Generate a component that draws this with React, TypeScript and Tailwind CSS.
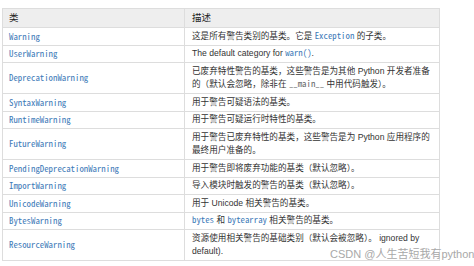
const mono = "font-['Noto_Sans_Mono_CJK_SC','Liberation_Mono',monospace]";

const rows: { name: string; desc: React.ReactNode }[] = [
  {
    name: 'Warning',
    desc: (
      <>
        这是所有警告类别的基类。它是 <Code>Exception</Code> 的子类。
      </>
    ),
  },
  {
    name: 'UserWarning',
    desc: (
      <>
        The default category for <Code>warn()</Code>.
      </>
    ),
  },
  {
    name: 'DeprecationWarning',
    desc: (
      <>
        已废弃特性警告的基类，这些警告是为其他 Python 开发者准备
        <br />
        的（默认会忽略，除非在 <Code gray>__main__</Code> 中用代码触发）。
      </>
    ),
  },
  { name: 'SyntaxWarning', desc: '用于警告可疑语法的基类。' },
  { name: 'RuntimeWarning', desc: '用于警告可疑运行时特性的基类。' },
  {
    name: 'FutureWarning',
    desc: (
      <>
        用于警告已废弃特性的基类，这些警告是为 Python 应用程序的
        <br />
        最终用户准备的。
      </>
    ),
  },
  { name: 'PendingDeprecationWarning', desc: '用于警告即将废弃功能的基类（默认忽略）。' },
  { name: 'ImportWarning', desc: '导入模块时触发的警告的基类（默认忽略）。' },
  { name: 'UnicodeWarning', desc: '用于 Unicode 相关警告的基类。' },
  {
    name: 'BytesWarning',
    desc: (
      <>
        <Code>bytes</Code> 和 <Code>bytearray</Code> 相关警告的基类。
      </>
    ),
  },
  {
    name: 'ResourceWarning',
    desc: (
      <>
        资源使用相关警告的基础类别（默认会被忽略）。 ignored by
        <br />
        default).
      </>
    ),
  },
];

function Code({ children, gray }: { children: React.ReactNode; gray?: boolean }) {
  return (
    <code className={`${mono} leading-none text-[8.8px] ${gray ? 'text-[#666]' : 'text-[#3d7ab8]'}`}>
      {children}
    </code>
  );
}

export default function App() {
  return (
    <div className="relative w-[474px] h-[266px] bg-white overflow-hidden font-['Liberation_Sans','Noto_Sans_CJK_SC',sans-serif]">
      <div className="pt-[7.5px] pl-[2px]">
        <table className="w-[438px] border-collapse border border-[#dddddd] table-fixed text-[8.6px] leading-[13.5px] text-[#333]">
          <colgroup>
            <col className="w-[182px]" />
            <col />
          </colgroup>
          <thead>
            <tr className="bg-[#eeeeee]">
              <th className="border border-[#dddddd] px-[6px] py-[2.5px] text-left font-normal text-[9.5px] text-[#222]">类</th>
              <th className="border border-[#dddddd] pl-[7px] pr-[2px] py-[2.5px] text-left font-normal text-[9.5px] text-[#222]">描述</th>
            </tr>
          </thead>
          <tbody>
            {rows.map((r) => (
              <tr key={r.name}>
                <td className={`${mono} border border-[#dddddd] px-[6px] py-[1.5px] align-middle text-[8.8px] text-[#3d7ab8]`}>
                  {r.name}
                </td>
                <td className="border border-[#dddddd] pl-[7px] pr-[2px] py-[1.5px] align-middle whitespace-nowrap">{r.desc}</td>
              </tr>
            ))}
          </tbody>
        </table>
      </div>

      {/* watermark */}
      <div className="absolute left-[330px] top-[247px] text-[11px] leading-[14px] text-[#a8a8a8] whitespace-nowrap [text-shadow:0_0_2px_#fff]">
        CSDN @人生苦短我有python
      </div>
    </div>
  );
}
